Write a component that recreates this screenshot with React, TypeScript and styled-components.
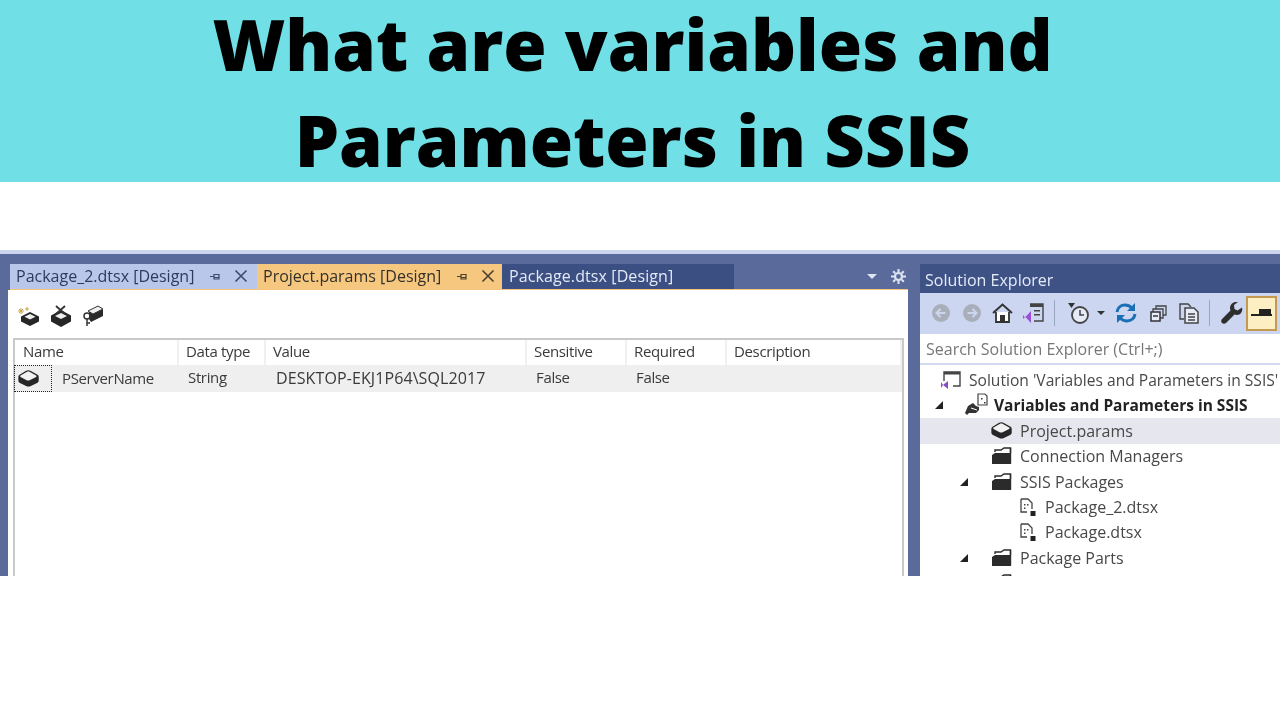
import React from "react";
import styled, { createGlobalStyle } from "styled-components";

const Global = createGlobalStyle`
  html, body { margin: 0; padding: 0; background: #fff; }
  body { font-family: "Open Sans", "Noto Sans", sans-serif; }
`;

const Page = styled.div`
  width: 1280px;
  height: 720px;
  overflow: hidden;
  background: #fff;
`;
const Banner = styled.header`
  height: 182px;
  background: #70e0e6;
  text-align: center;
`;
const Title = styled.h1`
  margin: 0;
  width: 1265px;
  font-family: "Open Sans", sans-serif;
  font-weight: 800;
  font-size: 70.2px;
  color: #000;
`;
const TitleLine = styled.span<{ $lower?: boolean }>`
  display: block;
  line-height: ${(p) => (p.$lower ? 84 : 88)}px;
  margin-top: ${(p) => (p.$lower ? 10 : 0)}px;
`;
const Ide = styled.section`
  margin-top: 68px;
  height: 326px;
  display: flex;
  flex-direction: column;
  overflow: hidden;
  background: #5a6b9b;
  border-top: 4px solid #cdd6ee;
  box-sizing: border-box;
  filter: blur(0.35px);
`;
const IdeBody = styled.div`
  flex: 1;
  display: flex;
  min-height: 0;
  padding-top: 10px;
`;
const DocWell = styled.div`
  width: 900px;
  margin-left: 8px;
  margin-right: 12px;
  display: flex;
  flex-direction: column;
`;
const TabStrip = styled.div`
  height: 25px;
  margin-left: 2px;
  display: flex;
  align-items: stretch;
  border-bottom: 1px solid #f5c57f;
  flex-shrink: 0;
`;
const Tab = styled.div<{ $kind: "idle" | "active" | "dark"; $w: number }>`
  width: ${(p) => p.$w}px;
  box-sizing: border-box;
  padding: 0 ${(p) => (p.$kind === "active" ? 7 : 9)}px 1px ${(p) => (p.$kind === "dark" ? 7 : 6)}px;
  display: flex;
  align-items: center;
  font-size: 16px;
  letter-spacing: ${(p) => (p.$kind === "dark" ? 0.1 : 0)}px;
  white-space: nowrap;
  color: ${(p) => (p.$kind === "dark" ? "#e3e9f7" : p.$kind === "active" ? "#33302a" : "#2f3b5e")};
  background: ${(p) => (p.$kind === "dark" ? "#3c4f82" : p.$kind === "active" ? "#f6c77f" : "#b9c7ea")};
`;
const TabLabel = styled.span`
  flex: 1;
`;
const TabIcons = styled.span`
  display: flex;
  align-items: center;
  gap: 13px;
`;
const StripTools = styled.div`
  margin-left: auto;
  margin-right: 2px;
  display: flex;
  align-items: center;
  gap: 14px;
`;
const DocPanel = styled.div`
  flex: 1;
  background: #fff;
  padding: 0 4px 0 5px;
  display: flex;
  flex-direction: column;
  min-height: 0;
`;
const DocTools = styled.div`
  height: 48px;
  flex-shrink: 0;
  box-sizing: border-box;
  padding: 3px 0 0 5px;
  display: flex;
  align-items: center;
  gap: 10px;
`;
const Grid = styled.div`
  flex: 1;
  border: 2px solid #c9c9c9;
  border-bottom: none;
`;
const Row = styled.div<{ $selected?: boolean }>`
  display: grid;
  grid-template-columns: 164px 87px 261px 100px 100px 1fr;
  height: ${(p) => (p.$selected ? 27 : 25)}px;
  align-items: center;
  font-size: 15px;
  letter-spacing: -0.35px;
  color: #3a3a3a;
  background: ${(p) => (p.$selected ? "#efefef" : "#fff")};
`;
const HeadCell = styled.div`
  height: 100%;
  box-sizing: border-box;
  display: flex;
  align-items: center;
  padding: 0 0 3px 7px;
  border-right: 2px solid #f0f0f0;
  &:first-child {
    padding-left: 8px;
  }
`;
const NameCell = styled.div`
  display: flex;
  align-items: center;
  height: 100%;
  padding-bottom: 2px;
  box-sizing: border-box;
`;
const Focus = styled.div`
  width: 38px;
  height: 27px;
  margin: 0 10px -2px -1px;
  box-sizing: border-box;
  border: 1px dotted #222;
  display: flex;
  align-items: center;
  padding-left: 3px;
`;
const ValueCell = styled.div`
  padding: 0 0 3px 9px;
`;
const WideValue = styled(ValueCell)`
  padding: 0 0 2px 10px;
  font-size: 16px;
  letter-spacing: 0.1px;
`;
const Solution = styled.aside`
  flex: 1;
  display: flex;
  flex-direction: column;
  min-width: 0;
  overflow: hidden;
  background: #fff;
`;
const SolutionTitle = styled.div`
  height: 29px;
  flex-shrink: 0;
  padding: 2px 0 0 5px;
  box-sizing: border-box;
  display: flex;
  align-items: center;
  background: #3f5286;
  color: #e4eaf7;
  font-size: 16px;
`;
const SolutionTools = styled.div`
  height: 41px;
  flex-shrink: 0;
  padding: 0 0 1px 6px;
  box-sizing: border-box;
  display: flex;
  align-items: center;
  background: #ccd6f0;
`;
const Tool = styled.span<{ $w?: number }>`
  width: ${(p) => p.$w ?? 30.5}px;
  height: 100%;
  display: flex;
  align-items: center;
  justify-content: center;
  flex-shrink: 0;
`;
const ToolSep = styled.span`
  width: 1px;
  height: 26px;
  margin: 0 10px 0 6px;
  background: #9aa5c0;
  flex-shrink: 0;
`;
const PinOn = styled.span`
  width: 31px;
  height: 35px;
  box-sizing: border-box;
  margin-left: 3px;
  display: flex;
  align-items: center;
  justify-content: center;
  background: #fdeec4;
  border: 2px solid #c39a4f;
  flex-shrink: 0;
`;
const Search = styled.div`
  height: 28px;
  flex-shrink: 0;
  margin-top: 1px;
  padding-left: 6px;
  display: flex;
  align-items: center;
  background: #fff;
  border-bottom: 2px solid #d4dbee;
  color: #777;
  font-size: 16px;
`;
const Tree = styled.div`
  padding-top: 2.4px;
`;
const TreeRow = styled.div<{ $depth: number; $selected?: boolean; $bold?: boolean; $size?: number }>`
  height: 25.4px;
  display: flex;
  align-items: center;
  white-space: nowrap;
  padding-left: ${(p) => p.$depth}px;
  font-size: ${(p) => p.$size ?? (p.$bold ? 15.5 : 16)}px;
  font-weight: ${(p) => (p.$bold ? 700 : 400)};
  color: ${(p) => (p.$bold ? "#222" : "#484848")};
  background: ${(p) => (p.$selected ? "#e6e6ee" : "transparent")};
`;
const Arrow = styled.span`
  width: 0;
  height: 0;
  flex-shrink: 0;
  border-style: solid;
  border-width: 0 0 8px 8px;
  border-color: transparent transparent #222 transparent;
`;
const IconSlot = styled.span<{ $w: number }>`
  width: ${(p) => p.$w}px;
  display: flex;
  align-items: center;
  flex-shrink: 0;
`;

const ParamBox = ({ size = 21 }: { size?: number }) => (
  <svg width={size} height={size * 0.82} viewBox="0 0 22 18">
    <path d="M8 1c1.500-1 4-1 5.500 0l7 4c1 .6 1.200 1.500 1.200 2.500v3.500c0 1.200-.6 2-1.700 2.700l-6.500 3c-1.500.7-3.500.7-5 0l-6.500-3C1 13 .4 12.200.4 11V7.500c0-1 .3-2 1.300-2.600z" fill="#262626" />
    <path d="M9 2c1-.6 2.500-.6 3.500 0l6.500 3.800c.6.4.6 1 0 1.400l-6.800 3.400c-1 .5-2.200.5-3.200 0L2.700 7.200c-.6-.4-.6-1 0-1.400z" fill="#f2f2f2" />
  </svg>
);
const NewParam = () => (
  <svg width="22" height="20" viewBox="0 0 22 20">
    <path d="M12 6l9 4.500v5L12 20l-9-4.500v-5z" fill="#262626" />
    <path d="M12 8l5.500 2.800L12 13.500 6.500 10.800z" fill="#eee" />
    <path d="M3 2v6M0 5h6M1 3l4 4M5 3 1 7M9 1v4M7 3h4" stroke="#c9a24a" strokeWidth="1" fill="none" />
  </svg>
);
const DeleteParam = () => (
  <svg width="22" height="22" viewBox="0 0 22 22">
    <path d="M11 5l10 5.500v6L11 22 1 16.500v-6z" fill="#262626" />
    <path d="M11 8l6 3-6 3-6-3z" fill="#eee" />
    <path d="M6 1l9 8M15 1 6 9" stroke="#333" strokeWidth="1.800" />
  </svg>
);
const KeyParam = () => (
  <svg width="22" height="22" viewBox="0 0 22 22">
    <path d="M7 7l10-5 4 3v6L9 17l-2-3z" fill="#2a2a2a" />
    <path d="M6 6l10-5 5 3-10 5z" fill="#efefef" stroke="#333" strokeWidth="1" />
    <circle cx="5" cy="11" r="3" fill="none" stroke="#333" strokeWidth="1.500" />
    <path d="M5 14v7M5 18h3" stroke="#333" strokeWidth="1.500" />
  </svg>
);
const Folder = () => (
  <svg width="21" height="18" viewBox="0 0 21 18">
    <path d="M4 5V3h6l3-2h6.500v5" fill="#fff" stroke="#2b2b2b" strokeWidth="1.400" />
    <path d="M19.500 1v15.500" stroke="#2b2b2b" strokeWidth="1.400" />
    <path d="M1 8l3-2h16v11H1z" fill="#2b2b2b" />
  </svg>
);
const PackageDoc = () => (
  <svg width="16" height="19" viewBox="0 0 16 19">
    <path d="M1 1h7l4 4v6M1 1v13h6" fill="none" stroke="#444" strokeWidth="1.300" />
    <path d="M4 6h1.500v1.500H4zM7 6h1.500v1.500H7zM4 9.500h1.500V11H4z" fill="#444" />
    <rect x="10.500" y="13" width="5" height="5" fill="#222" />
  </svg>
);
const SolutionIcon = () => (
  <svg width="21" height="20" viewBox="0 0 21 20">
    <path d="M4 11V2h16v14h-7" fill="none" stroke="#444" strokeWidth="1.400" />
    <path d="M4 2h16v2.500H4z" fill="#444" />
    <path d="M1 12l2 3 5-4v8l-5-4-2 3z" fill="#8a4cc6" />
  </svg>
);
const ProjectIcon = () => (
  <svg width="24" height="24" viewBox="0 0 24 24">
    <path d="M14 1h7l2 2v9h-9z" fill="none" stroke="#444" strokeWidth="1.200" />
    <path d="M17 5h1.500v1.500H17zM20 9h1.500v1.500H20z" fill="#333" />
    <path d="M1 20l3-7 5-3 3 3 3 1v3l-3 3H5l-2 2z" fill="#333" />
    <path d="M7 15l6 2" stroke="#fff" strokeWidth="1" />
  </svg>
);
const Pin = ({ color }: { color: string }) => (
  <svg width="11" height="9" viewBox="0 0 11 9">
    <path d="M0 4.500h4M4 2v5h5V2.500H4M4 5.500h5" fill="none" stroke={color} strokeWidth="1.200" />
  </svg>
);
const Close = ({ color }: { color: string }) => (
  <svg width="14" height="14" viewBox="0 0 14 14">
    <path d="M1.500 1.500l11 11M12.500 1.500l-11 11" stroke={color} strokeWidth="1.600" />
  </svg>
);
const Caret = ({ color, size = 10 }: { color: string; size?: number }) => (
  <svg width={size} height={size / 2} viewBox="0 0 10 5">
    <path d="M0 0h10L5 5z" fill={color} />
  </svg>
);
const Gear = () => (
  <svg width="15" height="15" viewBox="0 0 15 15">
    <circle cx="7.500" cy="7.500" r="3.500" fill="none" stroke="#dfe5f3" strokeWidth="2.200" />
    <path d="M7.500 0v3M7.500 12v3M0 7.500h3M12 7.500h3M2.200 2.200l2 2M10.800 10.800l2 2M12.800 2.200l-2 2M4.200 10.800l-2 2" stroke="#dfe5f3" strokeWidth="2" />
  </svg>
);
const NavCircle = ({ back }: { back?: boolean }) => (
  <svg width="18" height="18" viewBox="0 0 18 18">
    <circle cx="9" cy="9" r="9" fill="#a9afba" />
    <path d={back ? "M13.500 9H5M8.500 5 4.500 9l4 4" : "M4.500 9H13M9.500 5l4 4-4 4"} fill="none" stroke="#ccd6f0" strokeWidth="2" />
  </svg>
);
const Home = () => (
  <svg width="21" height="20" viewBox="0 0 21 20">
    <path d="M1 10 10.500 1.500 20 10" fill="none" stroke="#333" strokeWidth="2" />
    <path d="M4 9v10h13V9" fill="#fff" stroke="#333" strokeWidth="1.800" />
    <rect x="8" y="12" width="5" height="7" fill="#333" />
  </svg>
);
const VsDoc = () => (
  <svg width="22" height="21" viewBox="0 0 22 21">
    <path d="M8 1h13v17H12" fill="#ccd6f0" stroke="#444" strokeWidth="1.400" />
    <path d="M8 1h13v3H8zM12 7h6v1.500h-6zM12 11h6v1.500h-6z" fill="#444" />
    <path d="M1 12l2 2.500L9 8v12l-6-6.500L1 16z" fill="#9a4fd6" />
  </svg>
);
const Clock = () => (
  <svg width="24" height="23" viewBox="0 0 24 23">
    <path d="M1 1h7L4.500 6z" fill="#333" />
    <circle cx="13" cy="13" r="8" fill="#e6ebf7" stroke="#444" strokeWidth="1.800" />
    <path d="M13 8v5h4" fill="none" stroke="#444" strokeWidth="1.500" />
  </svg>
);
const Sync = () => (
  <svg width="22" height="22" viewBox="0 0 22 22">
    <path d="M2 10c.5-4.500 4-7 8-7 3 0 5 1 7 3" fill="none" stroke="#1a6fb5" strokeWidth="3" />
    <path d="M20 1v8h-8z" fill="#1a6fb5" />
    <path d="M20 12c-.5 4.500-4 7-8 7-3 0-5-1-7-3" fill="none" stroke="#1a6fb5" strokeWidth="3" />
    <path d="M2 21v-8h8z" fill="#1a6fb5" />
  </svg>
);
const Collapse = () => (
  <svg width="17" height="17" viewBox="0 0 17 17">
    <path d="M6 4V1h10v9h-3M3 7V4h10v9h-3" fill="none" stroke="#444" strokeWidth="1.300" />
    <rect x="1" y="7" width="9" height="9" fill="#e6ebf7" stroke="#333" strokeWidth="1.500" />
    <path d="M3 11h5" stroke="#333" strokeWidth="1.500" />
  </svg>
);
const CopyDocs = () => (
  <svg width="20" height="21" viewBox="0 0 20 21">
    <path d="M5 16H1V1h8l3 3" fill="none" stroke="#444" strokeWidth="1.400" />
    <path d="M6 5h9l4 4v11H6z" fill="#e6ebf7" stroke="#444" strokeWidth="1.500" />
    <path d="M9 11h7M9 14h7M9 17h7" stroke="#444" strokeWidth="1.300" />
  </svg>
);
const Wrench = () => (
  <svg width="22" height="22" viewBox="0 0 22 22">
    <path d="M21 5.500l-4.500 3-3-1.500L13 3l4-3c-4-.8-8 2-8 6 0 1 .2 1.800.5 2.500L1 17c-1.300 1.300-.8 3.200 0 4s2.700 1.300 4 0l8.500-8.500c.8.300 1.500.5 2.500.5 4 0 6-4 5-7.500z" fill="#2e2e2e" />
  </svg>
);
const PinBar = () => (
  <svg width="21" height="12" viewBox="0 0 21 12">
    <path d="M0 8h21" stroke="#222" strokeWidth="2" />
    <rect x="8" y="2" width="12" height="6" fill="#222" />
  </svg>
);

const App: React.FC = () => (
  <Page>
    <Global />
    <Banner>
      <Title>
        <TitleLine>What are variables and</TitleLine>
        <TitleLine $lower>Parameters in SSIS</TitleLine>
      </Title>
    </Banner>
    <Ide>
      <IdeBody>
        <DocWell>
          <TabStrip>
            <Tab $kind="idle" $w={247}>
              <TabLabel>Package_2.dtsx [Design]</TabLabel>
              <TabIcons>
                <Pin color="#3d4a70" />
                <Close color="#3d4a70" />
              </TabIcons>
            </Tab>
            <Tab $kind="active" $w={245}>
              <TabLabel>Project.params [Design]</TabLabel>
              <TabIcons>
                <Pin color="#4a4030" />
                <Close color="#4a4030" />
              </TabIcons>
            </Tab>
            <Tab $kind="dark" $w={232}>
              <TabLabel>Package.dtsx [Design]</TabLabel>
            </Tab>
            <StripTools>
              <Caret color="#dfe5f3" />
              <Gear />
            </StripTools>
          </TabStrip>
          <DocPanel>
            <DocTools>
              <NewParam />
              <DeleteParam />
              <KeyParam />
            </DocTools>
            <Grid>
              <Row>
                <HeadCell>Name</HeadCell>
                <HeadCell>Data type</HeadCell>
                <HeadCell>Value</HeadCell>
                <HeadCell>Sensitive</HeadCell>
                <HeadCell>Required</HeadCell>
                <HeadCell>Description</HeadCell>
              </Row>
              <Row $selected>
                <NameCell>
                  <Focus>
                    <ParamBox />
                  </Focus>
                  PServerName
                </NameCell>
                <ValueCell>String</ValueCell>
                <WideValue>DESKTOP-EKJ1P64\SQL2017</WideValue>
                <ValueCell>False</ValueCell>
                <ValueCell>False</ValueCell>
                <ValueCell />
              </Row>
            </Grid>
          </DocPanel>
        </DocWell>
        <Solution>
          <SolutionTitle>Solution Explorer</SolutionTitle>
          <SolutionTools>
            <Tool><NavCircle back /></Tool>
            <Tool><NavCircle /></Tool>
            <Tool><Home /></Tool>
            <Tool><VsDoc /></Tool>
            <ToolSep />
            <Tool $w={28}><Clock /></Tool>
            <Tool $w={16}><Caret color="#333" size={8} /></Tool>
            <Tool $w={33}><Sync /></Tool>
            <Tool $w={32}><Collapse /></Tool>
            <Tool $w={29}><CopyDocs /></Tool>
            <ToolSep />
            <Tool $w={23}><Wrench /></Tool>
            <PinOn><PinBar /></PinOn>
          </SolutionTools>
          <Search>Search Solution Explorer (Ctrl+;)</Search>
          <Tree>
            <TreeRow $depth={20} $size={15.6}>
              <IconSlot $w={29}><SolutionIcon /></IconSlot>
              Solution 'Variables and Parameters in SSIS'
            </TreeRow>
            <TreeRow $depth={15} $bold>
              <IconSlot $w={29}><Arrow /></IconSlot>
              <IconSlot $w={30}><ProjectIcon /></IconSlot>
              Variables and Parameters in SSIS
            </TreeRow>
            <TreeRow $depth={71} $selected>
              <IconSlot $w={29}><ParamBox /></IconSlot>
              Project.params
            </TreeRow>
            <TreeRow $depth={71}>
              <IconSlot $w={29}><Folder /></IconSlot>
              Connection Managers
            </TreeRow>
            <TreeRow $depth={40}>
              <IconSlot $w={31}><Arrow /></IconSlot>
              <IconSlot $w={29}><Folder /></IconSlot>
              SSIS Packages
            </TreeRow>
            <TreeRow $depth={100}>
              <IconSlot $w={25}><PackageDoc /></IconSlot>
              Package_2.dtsx
            </TreeRow>
            <TreeRow $depth={100}>
              <IconSlot $w={25}><PackageDoc /></IconSlot>
              Package.dtsx
            </TreeRow>
            <TreeRow $depth={40}>
              <IconSlot $w={31}><Arrow /></IconSlot>
              <IconSlot $w={29}><Folder /></IconSlot>
              Package Parts
            </TreeRow>
            <TreeRow $depth={71}>
              <IconSlot $w={29}><Folder /></IconSlot>
            </TreeRow>
          </Tree>
        </Solution>
      </IdeBody>
    </Ide>
  </Page>
);

export default App;
